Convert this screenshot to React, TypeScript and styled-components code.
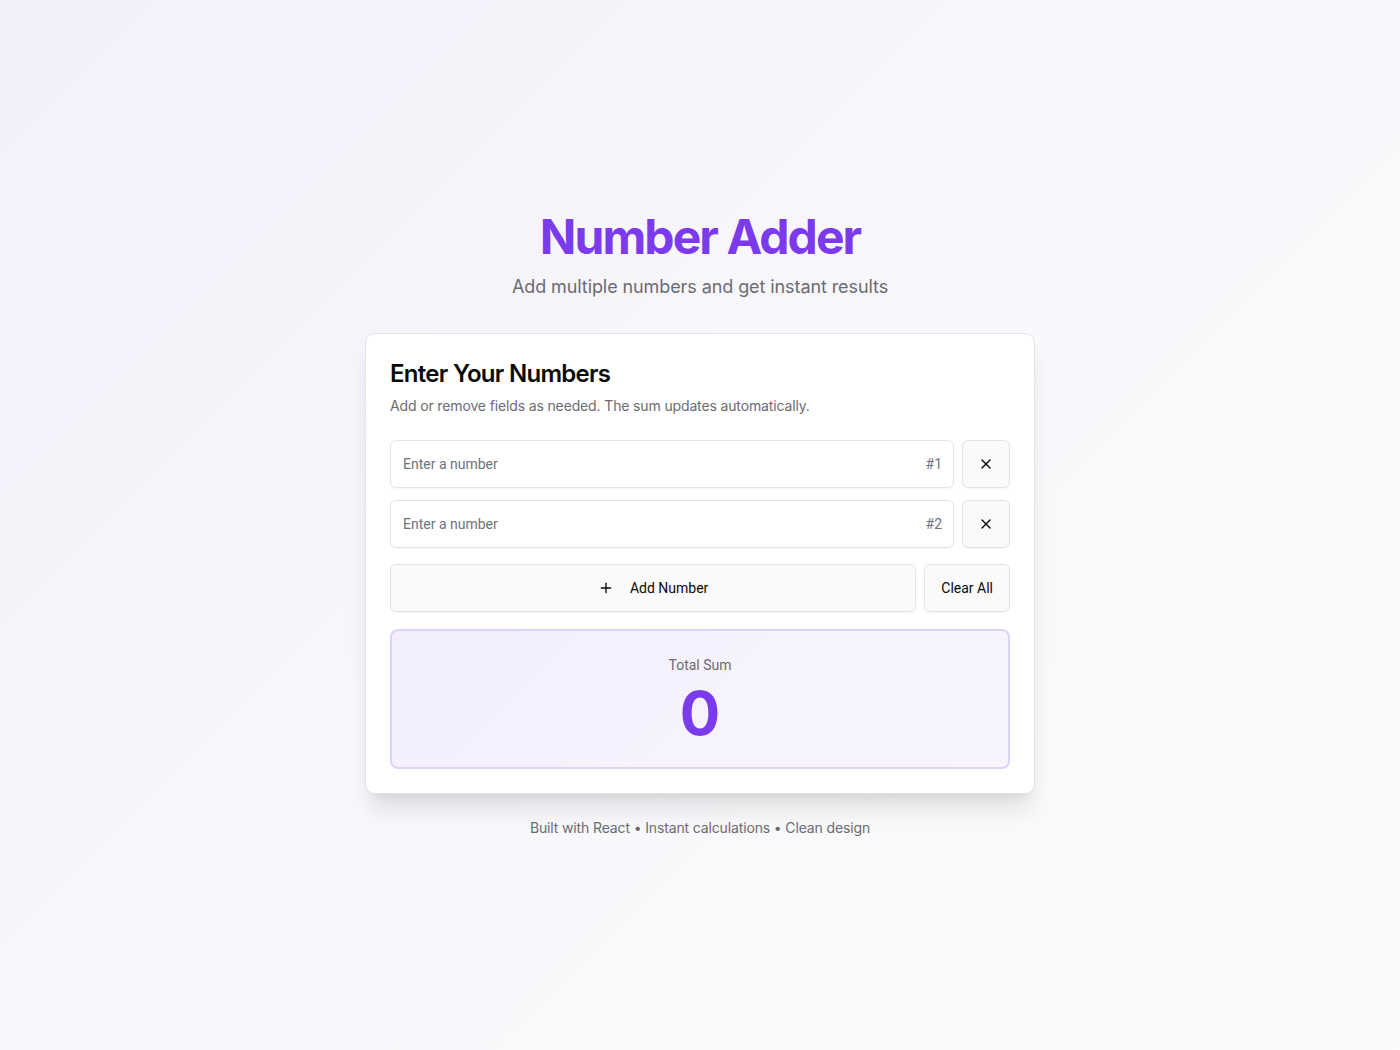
import styled, { createGlobalStyle } from 'styled-components';
import { Plus, X } from 'lucide-react';

const GlobalStyle = createGlobalStyle`
  * {
    box-sizing: border-box;
  }

  body {
    margin: 0;
    font-family: Inter, "Noto Sans", sans-serif;
    color: #0a0a0a;
    background: linear-gradient(135deg, #f3f0fa 0%, #f8f7fb 45%, #fbfbfc 100%);
    min-height: 100vh;
  }
`;

const Page = styled.main`
  min-height: 100vh;
  display: flex;
  align-items: center;
  justify-content: center;
  padding: 16px;
`;

const Wrapper = styled.div`
  width: 100%;
  max-width: 670px;
  display: flex;
  flex-direction: column;
  align-items: stretch;
`;

const Header = styled.header`
  text-align: center;
  margin-bottom: 32px;
`;

const Title = styled.h1`
  margin: 0;
  font-size: 48px;
  line-height: 48px;
  font-weight: 700;
  letter-spacing: -0.04em;
  color: #7c3aed;
`;

const Subtitle = styled.p`
  margin: 12px 0 0;
  font-size: 18px;
  line-height: 28px;
  letter-spacing: -0.005em;
  color: #6b6b73;
`;

const Card = styled.section`
  background: #ffffff;
  border: 1px solid #e4e4e7;
  border-radius: 10px;
  box-shadow: 0 20px 25px -5px rgba(0, 0, 0, 0.1), 0 8px 10px -6px rgba(0, 0, 0, 0.08);
  padding: 24px;
`;

const CardTitle = styled.h2`
  margin: 0;
  font-size: 24px;
  line-height: 32px;
  font-weight: 600;
  letter-spacing: -0.03em;
`;

const CardText = styled.p`
  margin: 6px 0 24px;
  font-size: 14px;
  line-height: 20px;
  letter-spacing: -0.01em;
  color: #6b6b73;
`;

const Fields = styled.div`
  display: flex;
  flex-direction: column;
  gap: 12px;
`;

const Row = styled.div`
  display: flex;
  gap: 8px;
`;

const InputWrap = styled.div`
  position: relative;
  flex: 1;
`;

const NumberInput = styled.input`
  width: 100%;
  height: 48px;
  border: 1px solid #e4e4e7;
  border-radius: 6px;
  padding: 0 44px 0 12px;
  font-family: Roboto, "Liberation Sans", sans-serif;
  font-size: 14px;
  color: #0a0a0a;
  background: #ffffff;
  box-shadow: 0 1px 2px rgba(0, 0, 0, 0.04);
  outline: none;

  &::placeholder {
    color: #71717a;
  }
`;

const Index = styled.span`
  position: absolute;
  right: 12px;
  top: 50%;
  transform: translateY(-50%);
  font-family: Roboto, "Liberation Sans", sans-serif;
  font-size: 14px;
  color: #71717a;
`;

const Button = styled.button<{ $wide?: boolean; $square?: boolean }>`
  height: 48px;
  width: ${(p) => (p.$square ? '48px' : 'auto')};
  flex: ${(p) => (p.$wide ? 1 : 'none')};
  padding: ${(p) => (p.$square ? '0' : '0 16px')};
  display: flex;
  align-items: center;
  justify-content: center;
  gap: 16px;
  border: 1px solid #e4e4e7;
  border-radius: 6px;
  background: #fafafa;
  box-shadow: 0 1px 2px rgba(0, 0, 0, 0.04);
  font-family: Roboto, "Liberation Sans", sans-serif;
  font-size: 14px;
  font-weight: 400;
  color: #0a0a0a;
  cursor: pointer;
`;

const Actions = styled.div`
  display: flex;
  gap: 8px;
  margin-top: 16px;
`;

const Result = styled.div`
  margin-top: 17px;
  border: 2px solid #ddd2fb;
  border-radius: 8px;
  background: linear-gradient(135deg, #f3eefe 0%, #f6f2fe 50%, #f8f5fe 100%);
  padding: 24px;
  text-align: center;
`;

const ResultLabel = styled.div`
  font-family: Roboto, "Liberation Sans", sans-serif;
  font-size: 14px;
  line-height: 20px;
  font-weight: 400;
  color: #6b6b73;
`;

const ResultValue = styled.div`
  margin-top: 8px;
  font-size: 60px;
  line-height: 60px;
  font-weight: 700;
  color: #7c3aed;
`;

const Footer = styled.footer`
  margin-top: 24px;
  text-align: center;
  font-size: 14px;
  line-height: 20px;
  letter-spacing: -0.01em;
  color: #6b6b73;
`;

const fields = [1, 2];

export default function App() {
  return (
    <>
      <GlobalStyle />
      <Page>
        <Wrapper>
          <Header>
            <Title>Number Adder</Title>
            <Subtitle>Add multiple numbers and get instant results</Subtitle>
          </Header>
          <Card>
            <CardTitle>Enter Your Numbers</CardTitle>
            <CardText>Add or remove fields as needed. The sum updates automatically.</CardText>
            <Fields>
              {fields.map((n) => (
                <Row key={n}>
                  <InputWrap>
                    <NumberInput type="number" placeholder="Enter a number" />
                    <Index>#{n}</Index>
                  </InputWrap>
                  <Button $square aria-label="Remove">
                    <X size={16} strokeWidth={2} />
                  </Button>
                </Row>
              ))}
            </Fields>
            <Actions>
              <Button $wide>
                <Plus size={16} strokeWidth={2} />
                Add Number
              </Button>
              <Button>Clear All</Button>
            </Actions>
            <Result>
              <ResultLabel>Total Sum</ResultLabel>
              <ResultValue>0</ResultValue>
            </Result>
          </Card>
          <Footer>Built with React • Instant calculations • Clean design</Footer>
        </Wrapper>
      </Page>
    </>
  );
}
